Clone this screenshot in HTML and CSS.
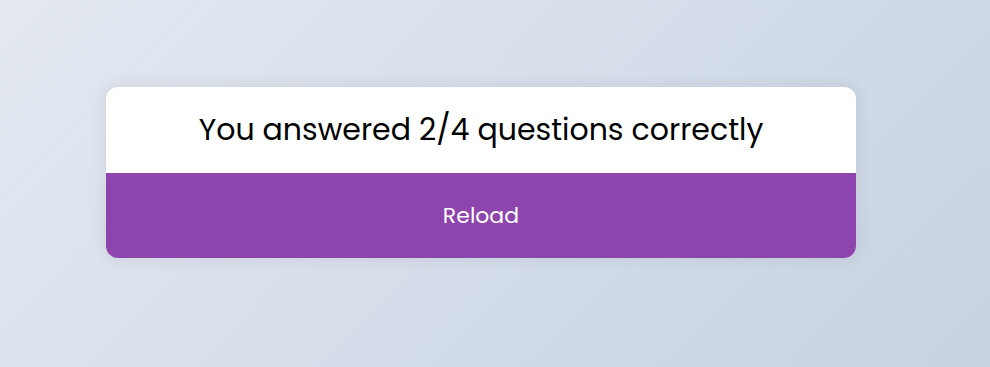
FILE: index.html
```html
<!DOCTYPE html>
<html lang="en">
<head>
<meta charset="utf-8">
<title>Quiz</title>
<link rel="stylesheet" href="styles.css">
</head>
<body>
<div class="quiz-container">
  <h2 class="result">You answered 2/4 questions correctly</h2>
  <button class="reload">Reload</button>
</div>
</body>
</html>
```
FILE: styles.css
```css
* { box-sizing: border-box; }
html, body { height: 100%; }
body {
  margin: 0;
  font-family: "Poppins", "Open Sans", "DejaVu Sans", sans-serif;
  background: linear-gradient(315deg, #c6d2e2 0%, #e4e9f1 100%);
  display: flex;
  justify-content: flex-start;
  align-items: flex-start;
  padding: 87px 0 0 106px;
}
.quiz-container {
  width: 750px;
  background: #fff;
  border-radius: 12px;
  box-shadow: 0 0 12px 3px rgba(100, 100, 100, 0.1);
  overflow: hidden;
  display: flex;
  flex-direction: column;
}
.result {
  margin: 0;
  height: 86px;
  display: flex;
  align-items: center;
  justify-content: center;
  font-size: 30px;
  font-weight: 400;
  color: #000;
}
.reload {
  border: none;
  background: #8e44ad;
  color: #fff;
  height: 85px;
  font-family: inherit;
  font-size: 22px;
  cursor: pointer;
}
```
